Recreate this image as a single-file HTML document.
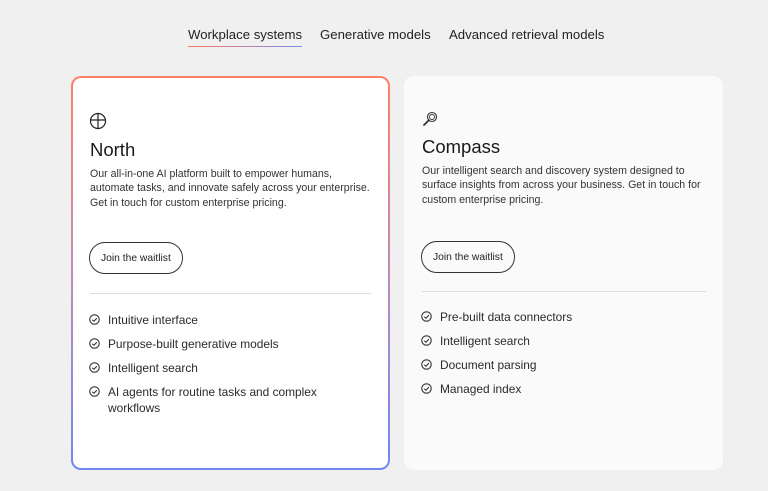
<!DOCTYPE html>
<html><head><meta charset="utf-8"><style>
*{margin:0;padding:0;box-sizing:border-box}
body{width:768px;height:491px;background:#f0f0f0;font-family:"Liberation Sans",sans-serif;color:#212121;position:relative;overflow:hidden}
.tabs{position:absolute;top:27px;left:0;width:768px;font-size:13.2px;color:#222}
.tabs span{position:absolute;top:0;padding-bottom:5px;white-space:nowrap}
.tabs .a::after{content:"";position:absolute;left:0;right:0;bottom:0;height:1.5px;background:linear-gradient(90deg,#ff7759,#7b8cf0)}
.card{position:absolute;top:76px;width:319px;height:394px;border-radius:10px}
.l{left:71px;background:linear-gradient(#fff,#fff) padding-box,linear-gradient(180deg,#ff7f66,#c08cb8 50%,#6f88f2) border-box;border:2px solid transparent}
.r{left:404px;background:#fafafa}
.in{position:absolute;left:17px;right:17px}
h2{position:absolute;top:61px;font-weight:400;font-size:18.5px;color:#1a1a1a}
p{position:absolute;top:89px;font-size:10.6px;line-height:14.3px;color:#333;width:285px}
.btn{position:absolute;top:164px;height:32px;border:1px solid #333;border-radius:16px;padding:1px 11px 0;font-size:10.3px;line-height:30px;color:#222}
hr{position:absolute;top:215px;left:17px;right:17px;border:0;border-top:1px solid #ddd}
ul{position:absolute;top:234px;list-style:none;font-size:11.9px;color:#2a2a2a}
li{position:relative;padding-left:18px;margin-bottom:8px;line-height:16px;width:240px}
li svg{position:absolute;left:-1px;top:2px}
</style></head><body>
<div class="tabs"><span class="a" style="left:188px">Workplace systems</span><span style="left:320px">Generative models</span><span style="left:449px">Advanced retrieval models</span></div>

<div class="card l">
<svg style="position:absolute;left:16px;top:34px" width="18" height="18" viewBox="0 0 18 18"><circle cx="9" cy="9" r="7.5" fill="none" stroke="#222" stroke-width="1.2"/><path d="M9 1.5V16.5M1.5 8H16.5" stroke="#222" stroke-width="1.2"/></svg>
<h2 class="in">North</h2>
<p class="in">Our all-in-one AI platform built to empower humans, automate tasks, and innovate safely across your enterprise. Get in touch for custom enterprise pricing.</p>
<div class="btn" style="left:16px">Join the waitlist</div>
<hr>
<ul class="in">
<li><svg width="11" height="11" viewBox="0 0 10 10"><circle cx="5" cy="5" r="4.3" fill="none" stroke="#333"/><path d="M3 5.2l1.5 1.4L7.2 3.8" fill="none" stroke="#333"/></svg>Intuitive interface</li>
<li><svg width="11" height="11" viewBox="0 0 10 10"><circle cx="5" cy="5" r="4.3" fill="none" stroke="#333"/><path d="M3 5.2l1.5 1.4L7.2 3.8" fill="none" stroke="#333"/></svg>Purpose-built generative models</li>
<li><svg width="11" height="11" viewBox="0 0 10 10"><circle cx="5" cy="5" r="4.3" fill="none" stroke="#333"/><path d="M3 5.2l1.5 1.4L7.2 3.8" fill="none" stroke="#333"/></svg>Intelligent search</li>
<li><svg width="11" height="11" viewBox="0 0 10 10"><circle cx="5" cy="5" r="4.3" fill="none" stroke="#333"/><path d="M3 5.2l1.5 1.4L7.2 3.8" fill="none" stroke="#333"/></svg>AI agents for routine tasks and complex workflows</li>
</ul>
</div>

<div class="card r">
<svg style="position:absolute;left:18px;top:35px" width="16" height="16" viewBox="0 0 16 16"><circle cx="10" cy="6" r="4.5" fill="none" stroke="#333" stroke-width="1.1"/><circle cx="10" cy="6" r="2.5" fill="none" stroke="#333" stroke-width="0.9"/><path d="M6.8 9.2L2 14" stroke="#333" stroke-width="1.8" stroke-linecap="round"/></svg>
<h2 class="in" style="left:18px;top:60px">Compass</h2>
<p class="in" style="left:18px;top:88px">Our intelligent search and discovery system designed to surface insights from across your business. Get in touch for custom enterprise pricing.</p>
<div class="btn" style="left:17px;top:165px">Join the waitlist</div>
<hr style="left:18px">
<ul class="in" style="left:18px;top:233px">
<li><svg width="11" height="11" viewBox="0 0 10 10"><circle cx="5" cy="5" r="4.3" fill="none" stroke="#333"/><path d="M3 5.2l1.5 1.4L7.2 3.8" fill="none" stroke="#333"/></svg>Pre-built data connectors</li>
<li><svg width="11" height="11" viewBox="0 0 10 10"><circle cx="5" cy="5" r="4.3" fill="none" stroke="#333"/><path d="M3 5.2l1.5 1.4L7.2 3.8" fill="none" stroke="#333"/></svg>Intelligent search</li>
<li><svg width="11" height="11" viewBox="0 0 10 10"><circle cx="5" cy="5" r="4.3" fill="none" stroke="#333"/><path d="M3 5.2l1.5 1.4L7.2 3.8" fill="none" stroke="#333"/></svg>Document parsing</li>
<li><svg width="11" height="11" viewBox="0 0 10 10"><circle cx="5" cy="5" r="4.3" fill="none" stroke="#333"/><path d="M3 5.2l1.5 1.4L7.2 3.8" fill="none" stroke="#333"/></svg>Managed index</li>
</ul>
</div>
</body></html>
